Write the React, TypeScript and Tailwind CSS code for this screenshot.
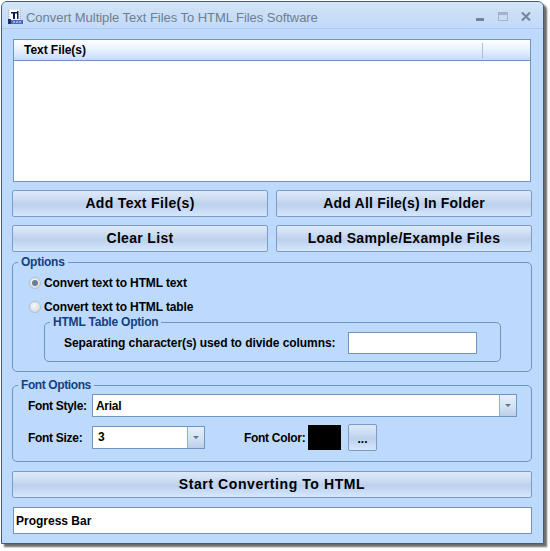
const font = { fontFamily: '"Liberation Sans", Arial, sans-serif' };

function Btn({ children, className = "" }: { children: React.ReactNode; className?: string }) {
  return (
    <button className={`flex items-center justify-center rounded-[2px] border border-[#7d9cc4] bg-[linear-gradient(180deg,#dce9fa_0%,#d3e2f6_20%,#bdd0ec_55%,#c4d8f3_70%,#d6e8fe_100%)] font-bold text-black ${className}`}>
      {children}
    </button>
  );
}

function Arrow({ className = "" }: { className?: string }) {
  return (
    <div className={`flex items-center justify-center border-l border-[#8fb0d6] bg-[linear-gradient(180deg,#e6f0fb_0%,#d5e3f5_50%,#bccfe8_100%)] ${className}`}>
      <svg width="6" height="3" viewBox="0 0 6 3"><path d="M0 0h6L3 3z" fill="#5a7590" /></svg>
    </div>
  );
}

function Radio({ checked }: { checked?: boolean }) {
  return (
    <span className="flex size-[12px] items-center justify-center rounded-full border border-[#b4bfcc] bg-[radial-gradient(circle_at_40%_35%,#f6f8fb,#cdd3da)]">
      {checked && <span className="size-[6px] rounded-full bg-[#6c7f93]" />}
    </span>
  );
}

export default function App() {
  return (
    <div style={font} className="h-[551px] w-[550px] bg-white pl-[1px] pt-[1px] text-[12px] text-black">
      <div className="flex h-[543px] w-[543px] flex-col overflow-hidden rounded-t-[6px] border border-[#3f5c7c] bg-[#bddafc] shadow-[3px_3px_2px_rgba(60,60,60,0.75)]">
        <div className="flex h-[27px] shrink-0 items-center border-b border-[#a9c9ee] bg-[linear-gradient(180deg,#d4e5f8_0%,#c9def6_45%,#c3dafa_100%)] pl-[6px] pr-[12px] pt-[4px]">
          <svg width="16" height="16" viewBox="0 0 16 16" className="shrink-0">
            <rect x="1" y="0" width="11" height="12" fill="#fff" stroke="#555" strokeWidth="0.5" strokeDasharray="1 1" />
            <path d="M3 3h6v1.5H7V10H5V4.500H3z" fill="#0a1a5c" />
            <rect x="9" y="2" width="1.500" height="8" fill="#0a1a5c" />
            <rect x="0" y="10" width="3" height="5" fill="#1d2f7a" />
            <rect x="3" y="11" width="12" height="4" fill="#4a6fb0" />
            <path d="M5 13h2M8 13h2M11 13h2" stroke="#dfe8f5" strokeWidth="1" />
          </svg>
          <span className="ml-[2px] pt-[1px] text-[13px] tracking-[-0.04px] text-[#6d7f92]">Convert Multiple Text Files To HTML Files Software</span>
          <div className="ml-auto flex -translate-y-[1px] items-center">
            <span className="h-[3px] w-[8px] translate-y-[3px] bg-[#71849b]" />
            <span className="ml-[14px] h-[9px] w-[10px] border border-[#a3b4c8] border-t-[3px] bg-[#c9dcf3]" />
            <svg width="10" height="9" viewBox="0 0 10 9" className="ml-[13px]">
              <path d="M1 .5l8 8M9 .5l-8 8" stroke="#71849b" strokeWidth="2" />
            </svg>
          </div>
        </div>

        <div className="flex flex-1 flex-col pl-[10px] pr-[11px] pt-[10px]">
          <div className="ml-[1px] h-[143px] w-[518px] shrink-0 border border-[#6f94c0] bg-white">
            <div className="flex h-[21px] items-center border-b border-[#6f94c0] bg-[linear-gradient(180deg,#ffffff_0%,#eaf3fe_45%,#c6dcf6_100%)] pl-[10px] font-bold tracking-[-0.05px]">
              Text File(s)
              <span className="ml-[396px] h-[15px] w-px bg-[#a5bfdc]" />
            </div>
          </div>

          <div className="mt-[8px] grid grid-cols-2 gap-x-[8px] gap-y-[8px] text-[14px] tracking-[0.33px]">
            <Btn className="h-[27px]">Add Text File(s)</Btn>
            <Btn className="h-[27px] tracking-[0.2px]">Add All File(s) In Folder</Btn>
            <Btn className="h-[27px]">Clear List</Btn>
            <Btn className="h-[27px]">Load Sample/Example Files</Btn>
          </div>

          <fieldset className="mt-[1px] h-[119px] shrink-0 rounded-[5px] border border-[#6f94c0]">
            <legend className="ml-[5px] px-[3px] font-bold tracking-[-0.25px] text-[#123f7f]">Options</legend>
            <div className="pl-[16px] tracking-[-0.12px]">
              <label className="mt-[5px] flex h-[14px] items-center gap-[3px] font-bold"><Radio checked /><span>Convert text to HTML text</span></label>
              <label className="mt-[10px] flex h-[14px] items-center gap-[3px] font-bold"><Radio /><span>Convert text to HTML table</span></label>
              <fieldset className="-mt-[1px] ml-[15px] h-[49px] w-[457px] rounded-[5px] border border-[#6f94c0]">
                <legend className="ml-[5px] px-[3px] font-bold tracking-[-0.2px] text-[#123f7f]">HTML Table Option</legend>
                <div className="mt-[1px] flex items-center pl-[19px] font-bold tracking-[-0.07px]">
                  <span>Separating character(s) used to divide columns:</span>
                  <input className="ml-auto mr-[23px] h-[22px] w-[129px] border border-[#6f94c0] bg-white" readOnly />
                </div>
              </fieldset>
            </div>
          </fieldset>

          <fieldset className="mt-[4px] h-[86px] shrink-0 rounded-[5px] border border-[#6f94c0] font-bold">
            <legend className="ml-[5px] px-[3px] tracking-[-0.4px] text-[#123f7f]">Font Options</legend>
            <div className="pl-[15px] pr-[14px] tracking-[-0.3px]">
              <div className="flex h-[23px] items-center">
                <span className="w-[64px]">Font Style:</span>
                <div className="flex h-[23px] flex-1 items-stretch border border-[#6f94c0] bg-white">
                  <span className="flex-1 self-center pl-[3px]">Arial</span>
                  <Arrow className="w-[17px]" />
                </div>
              </div>
              <div className="mt-[7px] flex h-[27px] items-center">
                <span className="w-[64px]">Font Size:</span>
                <div className="flex h-[23px] w-[113px] items-stretch border border-[#6f94c0] bg-white">
                  <span className="flex-1 -translate-y-[1px] self-center pl-[5px]">3</span>
                  <Arrow className="w-[17px]" />
                </div>
                <span className="ml-[39px] w-[60px] whitespace-nowrap">Font Color:</span>
                <span className="ml-[4px] h-[25px] w-[33px] bg-black" />
                <Btn className="ml-[7px] h-[27px] w-[29px] pt-[3px] text-[12px] tracking-normal">...</Btn>
              </div>
            </div>
          </fieldset>

          <Btn className="mt-[9px] h-[27px] shrink-0 text-[14px] tracking-[0.58px]">Start Converting To HTML</Btn>

          <div className="ml-[1px] mt-[9px] flex h-[27px] w-[519px] shrink-0 items-center border border-[#6f94c0] bg-white pl-[2px] font-bold">
            Progress Bar
          </div>
        </div>
      </div>
    </div>
  );
}
